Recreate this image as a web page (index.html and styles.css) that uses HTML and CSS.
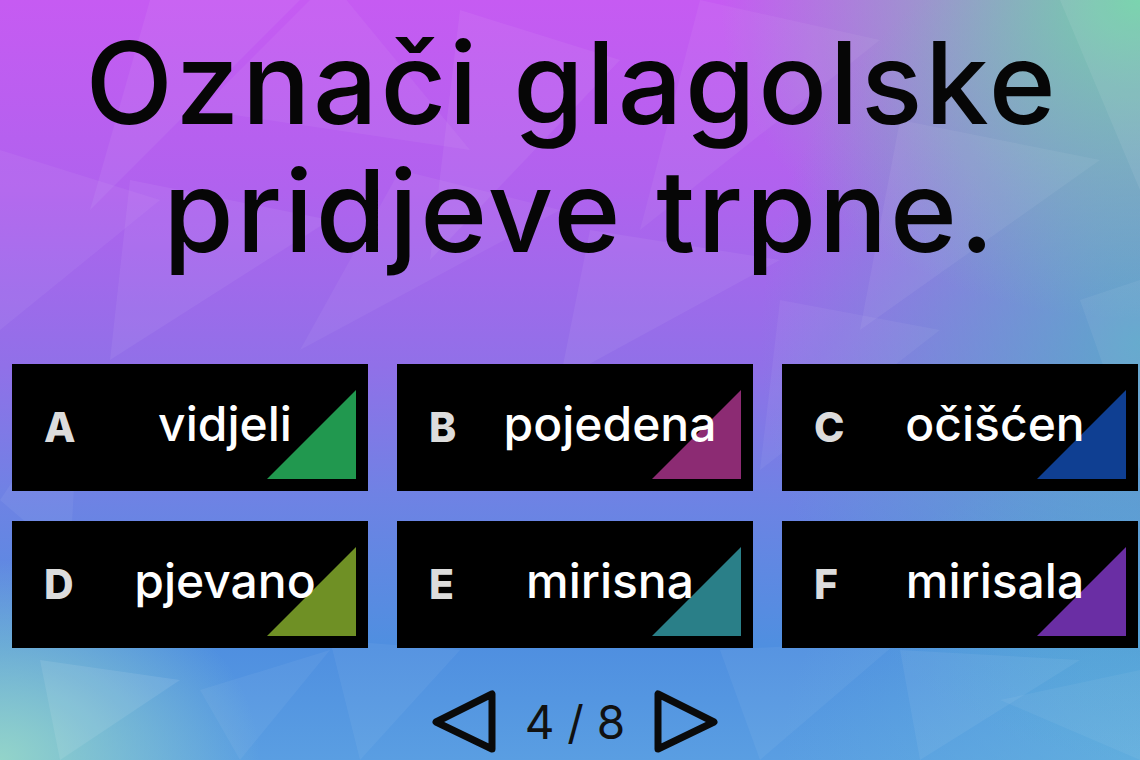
FILE: index.html
```html
<!DOCTYPE html>
<html lang="hr">
<head>
<meta charset="utf-8">
<title>Označi glagolske pridjeve trpne.</title>
<link rel="stylesheet" href="styles.css">
</head>
<body>
<div class="stage">
  <svg class="bg-pattern" width="1140" height="760" viewBox="0 0 1140 760" aria-hidden="true">
    <g fill="#ffffff">
      <polygon points="150,0 300,0 90,210" opacity="0.06"/>
      <polygon points="330,-20 470,150 200,110" opacity="0.05"/>
      <polygon points="460,10 620,60 430,260" opacity="0.06"/>
      <polygon points="700,0 880,40 640,230" opacity="0.05"/>
      <polygon points="900,120 1100,160 860,330" opacity="0.06"/>
      <polygon points="1060,0 1140,0 1140,190" opacity="0.07"/>
      <polygon points="0,150 160,200 0,330" opacity="0.05"/>
      <polygon points="130,180 330,220 110,360" opacity="0.06"/>
      <polygon points="400,170 560,210 300,350" opacity="0.05"/>
      <polygon points="590,230 780,260 560,380" opacity="0.06"/>
      <polygon points="780,300 940,330 760,470" opacity="0.05"/>
      <polygon points="1080,300 1140,280 1140,470" opacity="0.06"/>
      <polygon points="0,500 80,380 70,560" opacity="0.05"/>
      <polygon points="40,660 180,680 60,760" opacity="0.09"/>
      <polygon points="200,690 330,650 240,760" opacity="0.05"/>
      <polygon points="330,640 460,650 360,760" opacity="0.05"/>
      <polygon points="720,650 900,640 760,760" opacity="0.05"/>
      <polygon points="900,650 1080,660 920,760" opacity="0.06"/>
      <polygon points="1000,700 1140,670 1140,760" opacity="0.05"/>
    </g>
  </svg>

  <main class="content">
    <h1 class="title"><span class="title-line">Označi glagolske</span><span class="title-line title-line-2">pridjeve trpne.</span></h1>

    <div class="grid">
      <div class="card">
        <span class="label">A</span>
        <span class="word">vidjeli</span>
        <span class="corner corner-green"></span>
      </div>
      <div class="card">
        <span class="label">B</span>
        <span class="word">pojedena</span>
        <span class="corner corner-magenta"></span>
      </div>
      <div class="card">
        <span class="label">C</span>
        <span class="word">očišćen</span>
        <span class="corner corner-blue"></span>
      </div>
      <div class="card">
        <span class="label">D</span>
        <span class="word">pjevano</span>
        <span class="corner corner-olive"></span>
      </div>
      <div class="card">
        <span class="label">E</span>
        <span class="word">mirisna</span>
        <span class="corner corner-teal"></span>
      </div>
      <div class="card">
        <span class="label">F</span>
        <span class="word">mirisala</span>
        <span class="corner corner-purple"></span>
      </div>
    </div>

    <nav class="pager">
      <svg class="arrow" width="66" height="64" viewBox="0 0 66 64" aria-label="Prethodno">
        <path d="M61 4 L61 59 L5 32 Z" fill="none" stroke="#0a0a0a" stroke-width="7" stroke-linejoin="round"/>
      </svg>
      <span class="count">4 / 8</span>
      <svg class="arrow" width="66" height="64" viewBox="0 0 66 64" aria-label="Sljedeće">
        <path d="M5 4 L5 59 L61 32 Z" fill="none" stroke="#0a0a0a" stroke-width="7" stroke-linejoin="round"/>
      </svg>
    </nav>
  </main>
</div>
</body>
</html>
```

FILE: styles.css
```css
html, body {
  margin: 0;
  padding: 0;
}

body {
  font-family: Inter, "Open Sans", "Liberation Sans", sans-serif;
}

.stage {
  position: relative;
  width: 1140px;
  height: 760px;
  overflow: hidden;
  background:
    radial-gradient(ellipse 420px 320px at 100% 0%, rgba(110, 215, 165, 0.95) 0%, rgba(110, 215, 165, 0) 100%),
    radial-gradient(ellipse 380px 420px at 100% 45%, rgba(80, 180, 195, 0.8) 0%, rgba(80, 180, 195, 0) 100%),
    radial-gradient(ellipse 260px 200px at 0% 100%, rgba(150, 215, 200, 0.95) 0%, rgba(150, 215, 200, 0) 100%),
    radial-gradient(ellipse 360px 300px at 100% 100%, rgba(100, 180, 220, 0.7) 0%, rgba(100, 180, 220, 0) 100%),
    linear-gradient(180deg, #c65bf2 0%, #b062ee 25%, #9170e8 48%, #6f82e4 65%, #4f8fe0 85%, #5a9ee2 100%);
}

.bg-pattern {
  position: absolute;
  top: 0;
  left: 0;
}

.content {
  position: relative;
}

.title {
  margin: 0;
  padding-top: 28px;
  padding-left: 4px;
  display: flex;
  flex-direction: column;
  align-items: center;
  gap: 18px;
  font-size: 114px;
  line-height: 110px;
  font-weight: 500;
  letter-spacing: 2.6px;
  color: #060606;
}

.title-line {
  display: block;
  white-space: nowrap;
}

.title-line-2 {
  padding-left: 16px;
}

.grid {
  margin-top: 98px;
  padding-left: 12px;
  display: grid;
  grid-template-columns: repeat(3, 356px);
  grid-auto-rows: 127px;
  column-gap: 29px;
  row-gap: 30px;
}

.card {
  position: relative;
  display: flex;
  align-items: center;
  background: #000;
  overflow: hidden;
}

.label {
  position: relative;
  z-index: 1;
  width: 38px;
  padding-left: 32px;
  font-size: 41px;
  line-height: 1;
  font-weight: 800;
  color: #dcdcdc;
}

.word {
  position: relative;
  z-index: 1;
  flex: 1;
  text-align: center;
  font-size: 48px;
  line-height: 1;
  font-weight: 500;
  color: #ffffff;
  margin-bottom: 8px;
  white-space: nowrap;
}

.corner {
  position: absolute;
  right: 12px;
  bottom: 12px;
  width: 89px;
  height: 89px;
  clip-path: polygon(100% 0, 100% 100%, 0 100%);
}

.corner-green { background: #21984f; }
.corner-magenta { background: #8c2b73; }
.corner-blue { background: #0f3f92; }
.corner-olive { background: #6f9025; }
.corner-teal { background: #2a7f88; }
.corner-purple { background: #6a2ea4; }

.pager {
  margin-top: 42px;
  padding-left: 10px;
  display: flex;
  justify-content: center;
  align-items: center;
  gap: 28px;
}

.arrow {
  display: block;
}

.count {
  font-size: 46px;
  line-height: 1;
  color: #111;
}
```
